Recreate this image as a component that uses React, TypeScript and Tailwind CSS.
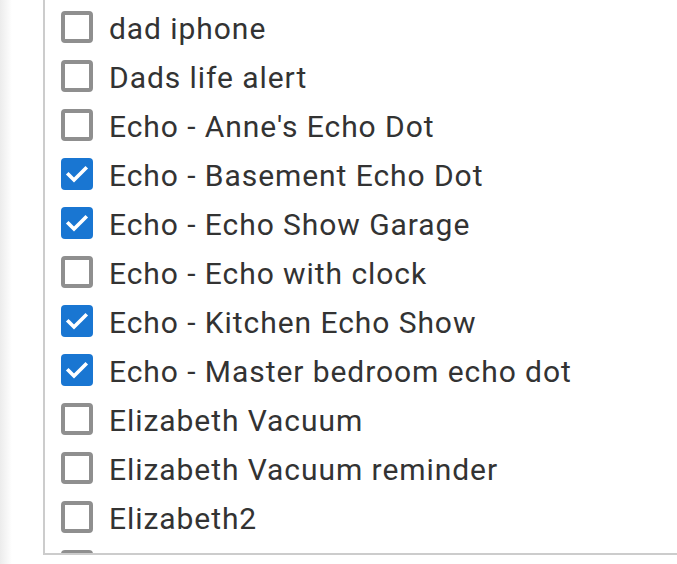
const items: { label: string; checked: boolean }[] = [
  { label: "dad iphone", checked: false },
  { label: "Dads life alert", checked: false },
  { label: "Echo - Anne's Echo Dot", checked: false },
  { label: "Echo - Basement Echo Dot", checked: true },
  { label: "Echo - Echo Show Garage", checked: true },
  { label: "Echo - Echo with clock", checked: false },
  { label: "Echo - Kitchen Echo Show", checked: true },
  { label: "Echo - Master bedroom echo dot", checked: true },
  { label: "Elizabeth Vacuum", checked: false },
  { label: "Elizabeth Vacuum reminder", checked: false },
  { label: "Elizabeth2", checked: false },
  { label: "Elizabeth3", checked: false },
];

function Box({ checked }: { checked: boolean }) {
  if (checked) {
    return (
      <span className="flex h-[32px] w-[32px] shrink-0 items-center justify-center rounded-[4px] bg-[#1976d2]">
        <svg viewBox="0 0 24 24" className="h-[30px] w-[30px]" fill="none">
          <path d="M5.2 12.4l4.4 4.4 9.2-9.2" stroke="#fff" strokeWidth="2.9" strokeLinecap="square" />
        </svg>
      </span>
    );
  }
  return <span className="h-[32px] w-[32px] shrink-0 rounded-[4px] border-[4px] border-[#8f8f8f] bg-white" />;
}

export default function App() {
  return (
    <div
      className="flex h-[564px] w-[677px] overflow-hidden bg-white"
      style={{ fontFamily: "Roboto, 'Liberation Sans', sans-serif" }}
    >
      <div className="w-[12px] shrink-0 bg-gradient-to-r from-[#ececec] to-white" />
      <div className="w-[31px] shrink-0" />
      <div className="flex h-[555px] flex-1 flex-col overflow-hidden border-b-2 border-l-2 border-[#cccccc] pt-[2px]">
        {items.map((it) => (
          <div key={it.label} className="flex h-[49px] shrink-0 items-center pl-[16px]">
            <Box checked={it.checked} />
            <span className="ml-[16px] mt-[4px] whitespace-nowrap text-[30px] leading-none tracking-[0.03125em] text-[#333333]">
              {it.label}
            </span>
          </div>
        ))}
      </div>
    </div>
  );
}
